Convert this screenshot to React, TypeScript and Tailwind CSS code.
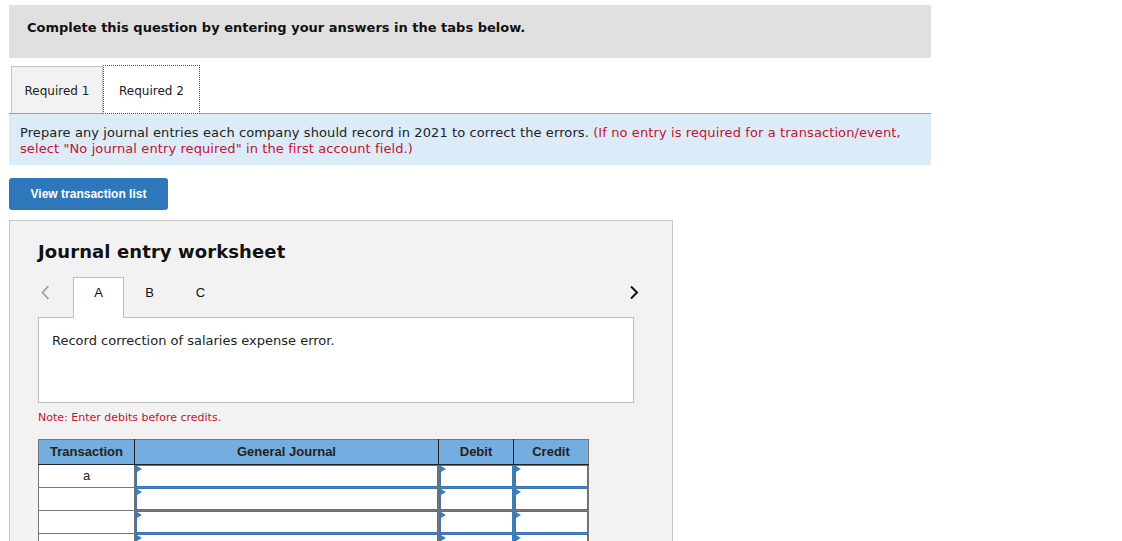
const VERDANA = "font-['DejaVu_Sans',Verdana,sans-serif]";
const ARIAL = "font-['Liberation_Sans',Arial,sans-serif]";

const COLUMNS = [
  { label: "Transaction", width: "w-[96px]" },
  { label: "General Journal", width: "w-[304px]" },
  { label: "Debit", width: "w-[75px]" },
  { label: "Credit", width: "w-[75px]" },
];

const ROWS = ["a", "", "", ""];

function InputCell() {
  return (
    <td className="h-[23px] border border-[#777] p-0">
      <div className="relative h-[22px] border border-l-2 border-[#3b77b3] bg-white">
        <span className="absolute left-0 top-0 h-0 w-0 border-y-[3px] border-l-[5px] border-y-transparent border-l-[#3a80c8]" />
      </div>
    </td>
  );
}

export default function App() {
  return (
    <div className="min-h-screen bg-white">
      <div className="w-[931px] pl-[9px] pt-[5px]">
        <div className={`h-[53px] bg-[#e0e0e0] pl-[18px] pt-[15px] text-[13px] font-bold leading-4 text-[#111] ${VERDANA}`}>
          Complete this question by entering your answers in the tabs below.
        </div>

        <div className={`mt-[8px] flex border-b border-[#a0a0a0] pl-[2px] text-[12px] text-[#222] ${VERDANA}`}>
          <div className="flex h-[47px] w-[92px] items-center justify-center border border-b-0 border-[#c2c2c2] bg-[#f2f2f2] pt-[2px]">
            Required 1
          </div>
          <div className="-mt-px -mb-px flex h-[49px] w-[97px] items-center justify-center border border-dotted border-[#1560c2] bg-white pt-[2px]">
            Required 2
          </div>
        </div>

        <div className={`h-[51px] bg-[#dcebf8] pl-[11px] pt-[11px] text-[13px] leading-4 tracking-[0.1px] text-[#222] ${VERDANA}`}>
          Prepare any journal entries each company should record in 2021 to correct the errors.{" "}
          <span className="text-[#c4122f]">
            (If no entry is required for a transaction/event,
            <br />
            select "No journal entry required" in the first account field.)
          </span>
        </div>

        <button
          className={`mt-[13px] flex h-[32px] w-[159px] items-center justify-center rounded-[3px] bg-[#2f77bb] text-[12px] font-bold text-white ${ARIAL}`}
        >
          View transaction list
        </button>

        <div className="mt-[10px] h-[340px] w-[664px] border border-[#c8c8c8] bg-[#f2f2f2] pl-[28px] pt-[20px]">
          <h2 className={`text-[18px] font-bold leading-[22px] tracking-[0.1px] text-[#111] ${VERDANA}`}>Journal entry worksheet</h2>

          <div className={`mt-[14px] flex h-[40px] w-[601px] items-start ${ARIAL}`}>
            <svg className="ml-[3px] mt-[8px] h-[15px] w-[9px]" viewBox="0 0 9 15" fill="none">
              <polyline points="7.5,1 1.5,7.5 7.5,14" stroke="#9a9a9a" strokeWidth="1.6" />
            </svg>
            <div className="ml-[23px] flex h-full text-[13px] leading-4 text-[#111]">
              <div className="relative z-10 -mb-px flex h-[41px] w-[51px] justify-center border border-b-0 border-[#bdbdbd] bg-white pt-[7px]">
                A
              </div>
              <div className="flex w-[51px] justify-center pt-[8px]">B</div>
              <div className="flex w-[51px] justify-center pt-[8px]">C</div>
            </div>
            <svg className="ml-auto mt-[8px] h-[15px] w-[10px]" viewBox="0 0 10 15" fill="none">
              <polyline points="2,1.5 8,7.5 2,13.5" stroke="#111" strokeWidth="2" />
            </svg>
          </div>

          <div className={`h-[86px] w-[596px] border border-[#bdbdbd] bg-white pl-[13px] pt-[15px] text-[13px] leading-4 text-[#222] ${VERDANA}`}>
            Record correction of salaries expense error.
          </div>

          <p className={`mt-[8px] text-[11px] leading-[14px] text-[#c4122f] ${VERDANA}`}>Note: Enter debits before credits.</p>

          <table className={`mt-[14px] w-[550px] table-fixed border-collapse border border-[#777] ${ARIAL}`}>
            <thead>
              <tr className="h-[25px] bg-[#74addf]">
                {COLUMNS.map((c, i) => (
                  <th
                    key={c.label}
                    className={`${c.width} border-b border-b-[#222] p-0 text-center text-[13px] font-bold text-[#222] ${
                      i > 0 ? "border-l border-l-[#222]" : ""
                    }`}
                  >
                    {c.label}
                  </th>
                ))}
              </tr>
            </thead>
            <tbody>
              {ROWS.map((t, i) => (
                <tr key={i} className="h-[23px]">
                  <td className="border border-[#777] bg-white p-0 text-center text-[13px] text-[#222]">{t}</td>
                  <InputCell />
                  <InputCell />
                  <InputCell />
                </tr>
              ))}
            </tbody>
          </table>
        </div>
      </div>
    </div>
  );
}
